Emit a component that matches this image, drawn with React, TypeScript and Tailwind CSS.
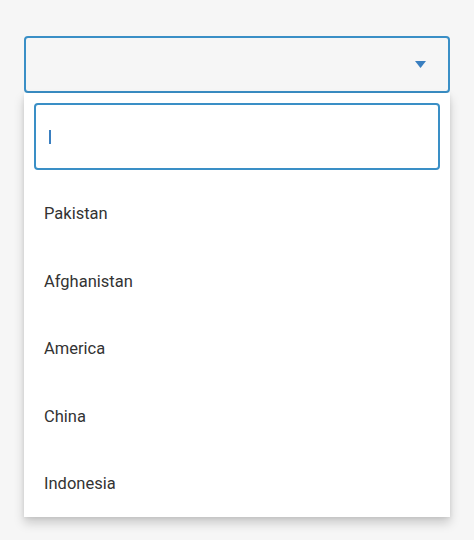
import { useState } from 'react';

const countries = ['Pakistan', 'Afghanistan', 'America', 'China', 'Indonesia'];

export default function App() {
  const [query, setQuery] = useState('');
  const shown = countries.filter((c) => c.toLowerCase().includes(query.toLowerCase()));

  return (
    <div className="h-[540px] w-[474px] bg-[#f6f6f6] pt-[36px] font-['Roboto',sans-serif]">
      <div className="mx-[24px] w-[426px]">
        <button className="flex h-[57px] w-full items-center justify-end rounded-[4px] border-2 border-[#3a8fc6] bg-[#f6f6f6] pr-[22px]">
          <svg width="11" height="7" viewBox="0 0 11 7">
            <path d="M0 0h11L5.5 7z" fill="#3a7fc0" />
          </svg>
        </button>
        <div className="h-[424px] bg-white shadow-[0_6px_10px_rgba(0,0,0,0.18),0_1px_4px_rgba(0,0,0,0.08)]">
          <div className="px-[10px] pt-[10px] pb-[11px]">
            <div className="relative flex h-[67px] items-center rounded-[4px] border-2 border-[#3a8fc6] bg-white px-[13px]">
              {!query && <span className="absolute left-[13px] h-[14px] w-[2px] bg-[#3a7fc0]" />}
              <input
                value={query}
                onChange={(e) => setQuery(e.target.value)}
                className="w-full bg-transparent text-[16.5px] text-[#333] caret-[#3a7fc0] outline-none"
              />
            </div>
          </div>
          {shown.map((c) => (
            <div key={c} className="flex h-[67.5px] items-center px-[20px] text-[16.5px] text-[#333]">
              {c}
            </div>
          ))}
        </div>
      </div>
    </div>
  );
}
